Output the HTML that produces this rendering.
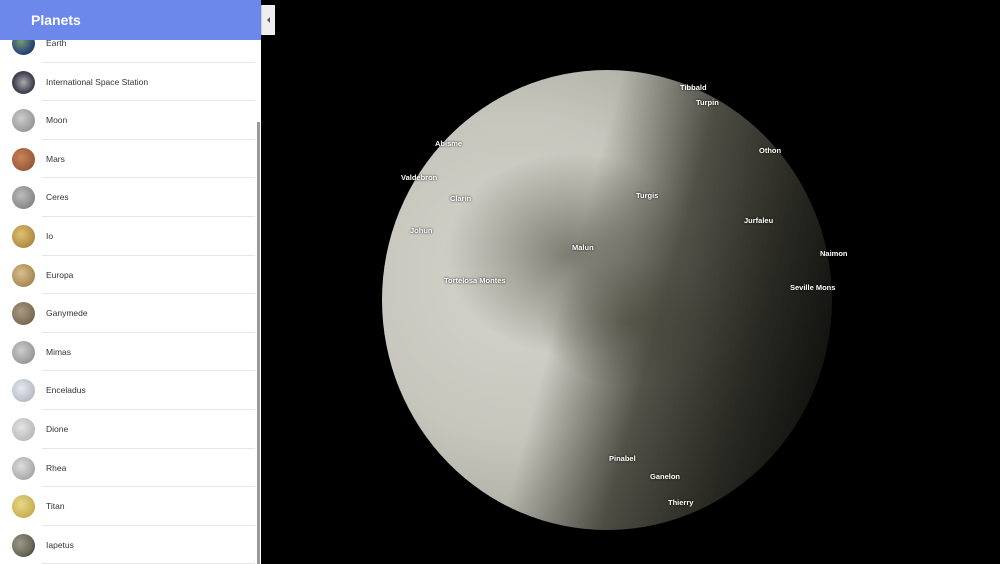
<!DOCTYPE html>
<html><head><style>
*{margin:0;padding:0;box-sizing:border-box}
body{width:1000px;height:564px;overflow:hidden;background:#000;font-family:"Liberation Sans",Arial,sans-serif;position:relative}
#side{position:absolute;left:0;top:0;width:261px;height:564px;background:#fff;overflow:hidden}
#hdr{position:absolute;left:0;top:0;width:261px;height:40px;background:#6c88ea;color:#fff;font-size:14px;font-weight:bold;padding:12px 0 0 31px;z-index:2}
.row{position:absolute;left:0;width:257px;height:38.6px}
.row .ic{position:absolute;left:12px;top:8px;width:23px;height:23px;border-radius:50%}
.row .t{position:absolute;left:46px;top:14px;font-size:8.5px;color:#333}
.row .ln{position:absolute;left:42px;right:2px;bottom:0;height:1px;background:#e6e6e6}
#sb{position:absolute;left:257px;top:122px;width:3px;height:442px;background:#9a9a9a}
#tog{position:absolute;left:261px;top:5px;width:14px;height:30px;background:#eee;border-left:1px solid #ccc}
#tog:after{content:"";position:absolute;left:5px;top:12px;border-right:3px solid #555;border-top:3px solid transparent;border-bottom:3px solid transparent}
#moon{position:absolute;left:382px;top:70px;width:450px;height:460px;border-radius:50%;
background:
radial-gradient(ellipse 28% 22% at 42% 40%,rgba(55,55,42,.55),rgba(55,55,42,0) 100%),
radial-gradient(ellipse 20% 14% at 55% 55%,rgba(55,55,42,.45),rgba(55,55,42,0) 100%),
linear-gradient(105deg,rgba(30,30,22,0) 42%,rgba(45,45,35,.75) 60%,rgba(30,30,24,.92) 78%,rgba(8,8,6,1) 98%),
radial-gradient(circle at 30% 45%,#d4d4cc 0%,#c6c6bd 40%,#a6a69c 70%,#6a6a60 100%);}
.lb{position:absolute;color:#fff;font-size:7.5px;font-weight:bold;text-shadow:0 0 2px #000}
</style></head><body>
<div id="side">
<div id="hdr">Planets</div>
<div class="row" style="top:24px"><div class="ic" style="background:radial-gradient(circle at 40% 40%,#7a9a6a,#2a4a7a 60%,#123)"></div><div class="t">Earth</div><div class="ln"></div></div>
<div class="row" style="top:62.6px"><div class="ic" style="background:radial-gradient(circle at 50% 50%,#aaa,#445 60%,#223)"></div><div class="t">International Space Station</div><div class="ln"></div></div>
<div class="row" style="top:101.2px"><div class="ic" style="background:radial-gradient(circle at 40% 40%,#ccc,#999 70%,#777)"></div><div class="t">Moon</div><div class="ln"></div></div>
<div class="row" style="top:139.8px"><div class="ic" style="background:radial-gradient(circle at 40% 40%,#c9845a,#9a5a38 70%,#6a3a22)"></div><div class="t">Mars</div><div class="ln"></div></div>
<div class="row" style="top:178.4px"><div class="ic" style="background:radial-gradient(circle at 40% 40%,#bbb,#888 70%,#666)"></div><div class="t">Ceres</div><div class="ln"></div></div>
<div class="row" style="top:217px"><div class="ic" style="background:radial-gradient(circle at 40% 40%,#e0c070,#b08a40 70%,#7a5a2a)"></div><div class="t">Io</div><div class="ln"></div></div>
<div class="row" style="top:255.6px"><div class="ic" style="background:radial-gradient(circle at 40% 40%,#d8c090,#a88850 70%,#7a6030)"></div><div class="t">Europa</div><div class="ln"></div></div>
<div class="row" style="top:294.2px"><div class="ic" style="background:radial-gradient(circle at 40% 40%,#aa9a80,#7a6a55 70%,#554a3a)"></div><div class="t">Ganymede</div><div class="ln"></div></div>
<div class="row" style="top:332.8px"><div class="ic" style="background:radial-gradient(circle at 40% 40%,#ccc,#999 70%,#777)"></div><div class="t">Mimas</div><div class="ln"></div></div>
<div class="row" style="top:371.4px"><div class="ic" style="background:radial-gradient(circle at 40% 40%,#e4e8ee,#b8bcc4 70%,#9aa0a8)"></div><div class="t">Enceladus</div><div class="ln"></div></div>
<div class="row" style="top:410px"><div class="ic" style="background:radial-gradient(circle at 40% 40%,#e4e4e4,#bbb 70%,#999)"></div><div class="t">Dione</div><div class="ln"></div></div>
<div class="row" style="top:448.6px"><div class="ic" style="background:radial-gradient(circle at 40% 40%,#ddd,#aaa 70%,#888)"></div><div class="t">Rhea</div><div class="ln"></div></div>
<div class="row" style="top:487.2px"><div class="ic" style="background:radial-gradient(circle at 40% 40%,#e8d888,#c8b050 70%,#8a7a30)"></div><div class="t">Titan</div><div class="ln"></div></div>
<div class="row" style="top:525.8px"><div class="ic" style="background:radial-gradient(circle at 35% 40%,#9a9888,#6a6858 60%,#222 100%)"></div><div class="t">Iapetus</div><div class="ln"></div></div>
<div id="sb"></div>
</div>
<div id="tog"></div>
<div id="moon"></div>
<div class="lb" style="left:680px;top:83px">Tibbald</div>
<div class="lb" style="left:696px;top:98px">Turpin</div>
<div class="lb" style="left:435px;top:139px">Abisme</div>
<div class="lb" style="left:759px;top:146px">Othon</div>
<div class="lb" style="left:401px;top:173px">Valdebron</div>
<div class="lb" style="left:450px;top:194px">Clarin</div>
<div class="lb" style="left:636px;top:191px">Turgis</div>
<div class="lb" style="left:744px;top:216px">Jurfaleu</div>
<div class="lb" style="left:410px;top:226px">Johun</div>
<div class="lb" style="left:572px;top:243px">Malun</div>
<div class="lb" style="left:820px;top:249px">Naimon</div>
<div class="lb" style="left:444px;top:276px">Tortelosa Montes</div>
<div class="lb" style="left:790px;top:283px">Seville Mons</div>
<div class="lb" style="left:609px;top:454px">Pinabel</div>
<div class="lb" style="left:650px;top:472px">Ganelon</div>
<div class="lb" style="left:668px;top:498px">Thierry</div>
</body></html>
